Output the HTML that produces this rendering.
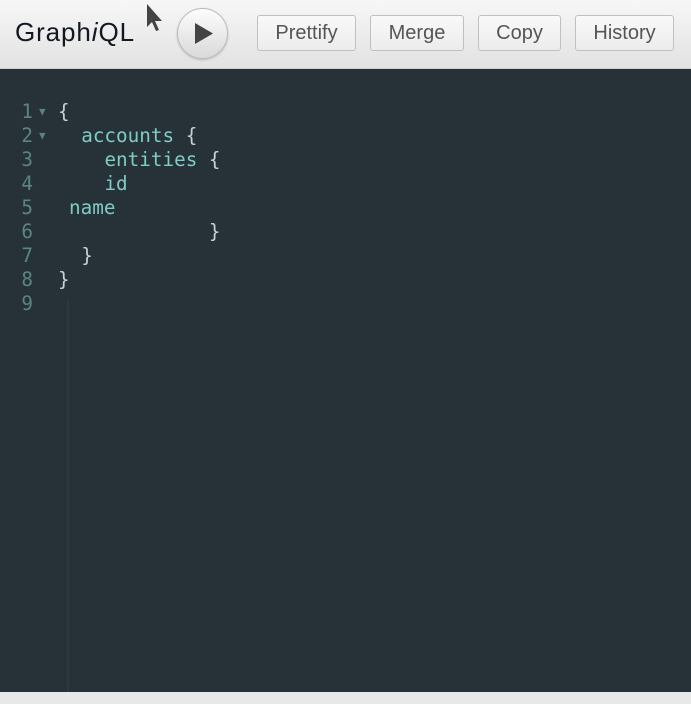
<!DOCTYPE html>
<html><head><style>
body{margin:0;width:691px;height:704px;overflow:hidden;background:#263238;font-family:"Liberation Sans",sans-serif;position:relative}
.top{position:absolute;left:0;top:0;width:691px;height:68px;background:linear-gradient(#f7f7f7,#e2e2e2);border-bottom:1px solid #d0d0d0}
.logo{position:absolute;left:15px;top:17px;font-size:26px;color:#141823;letter-spacing:0.9px}
.btn{position:absolute;top:15px;height:34px;border:1px solid #c0c0c0;border-radius:3px;background:linear-gradient(#f9f9f9,#ececec);font-size:20px;color:#555;text-align:center;line-height:34px;box-sizing:content-box}
.run{position:absolute;left:177px;top:8px;width:49px;height:49px;border-radius:50%;border:1px solid #bbb;background:linear-gradient(#fdfdfd,#d9d9d9);box-shadow:0 1px 2px rgba(0,0,0,.2)}
.code{position:absolute;left:0;top:100px;font-family:"DejaVu Sans Mono",monospace;font-size:19.3px;line-height:24px;white-space:pre;color:#c8d0d4}
.ln{position:absolute;left:0;width:33px;text-align:right;color:#5b8580}
.k{color:#80cbc4}
.bar{position:absolute;left:0;top:692px;width:691px;height:12px;background:#e8e8e8}
.gut{position:absolute;left:67px;top:300px;width:2px;height:392px;background:#2d393e}
</style></head><body>
<div class="top">
<div class="logo">Graph<i>i</i>QL</div>
<div class="run"><svg width="49" height="49"><polygon points="17,14 17,35 35,24.5" fill="#444"/></svg></div>
<div class="btn" style="left:257px;width:97px">Prettify</div>
<div class="btn" style="left:370px;width:92px">Merge</div>
<div class="btn" style="left:478px;width:81px">Copy</div>
<div class="btn" style="left:575px;width:97px">History</div>
<svg style="position:absolute;left:145px;top:3px" width="20" height="32"><polygon points="2,1 2,24 7,19 11,28 14,27 10,18 17,18" fill="#444"/></svg>
</div>
<div class="gut"></div>
<div class="code">
<div class="ln" style="top:0">1</div><div class="ln" style="top:24px">2</div><div class="ln" style="top:48px">3</div><div class="ln" style="top:72px">4</div><div class="ln" style="top:96px">5</div><div class="ln" style="top:120px">6</div><div class="ln" style="top:144px">7</div><div class="ln" style="top:168px">8</div><div class="ln" style="top:192px">9</div>
<div style="position:absolute;left:39px;top:0;color:#5b8580;font-size:11px;line-height:24px">▼<br>▼</div>
<div style="position:absolute;left:58px;top:0">{
  <span class="k">accounts</span> {
    <span class="k">entities</span> {
    <span class="k">id</span>
</div>
<div style="position:absolute;left:69px;top:96px" class="k">name</div>
<div style="position:absolute;left:58px;top:120px">             }
  }
}</div>
</div>
<div class="bar"></div>
</body></html>
